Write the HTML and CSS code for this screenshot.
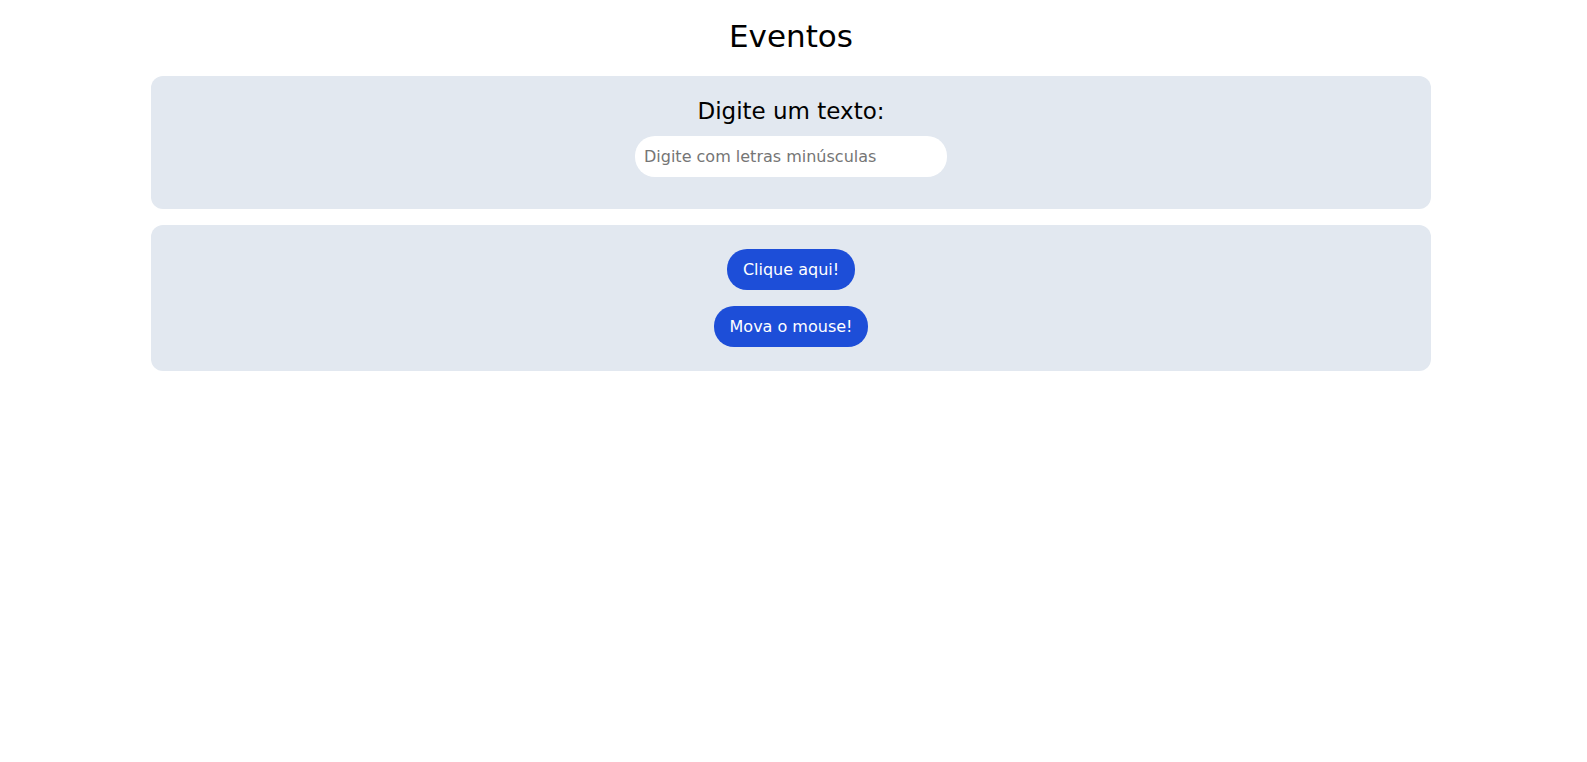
FILE: index.html
```html
<!DOCTYPE html>
<html lang="pt-BR">
<head>
    <meta charset="UTF-8">
    <meta name="viewport" content="width=device-width, initial-scale=1.0">
    <title>Eventos</title>
    <link rel="stylesheet" href="styles.css">
</head>
<body>
    <h1>Eventos</h1>

    <div class="container">
        <div class="card card-input">
            <h2>Digite um texto:</h2>
            <input type="text" id="texto" placeholder="Digite com letras minúsculas">
        </div>

        <div class="card card-buttons">
            <button id="clique">Clique aqui!</button>
            <button id="mouse">Mova o mouse!</button>
        </div>
    </div>
</body>
</html>
```

FILE: styles.css
```css
body {
    font-family: 'DejaVu Sans', sans-serif;
    margin: 0;
    padding: 0 5px 0 0;
    color: #000;
    background-color: #fff;
}
h1 {
    font-size: 31px;
    font-weight: normal;
    line-height: 40px;
    text-align: center;
    margin: 16px 0 20px;
}
.container {
    max-width: 1280px;
    margin: 0 auto;
    display: flex;
    flex-direction: column;
    gap: 16px;
}
.card {
    background-color: #e2e8f0;
    border-radius: 12px;
    display: flex;
    flex-direction: column;
    align-items: center;
}
.card-input {
    padding: 20px 0 32px;
}
.card-input h2 {
    font-size: 23px;
    font-weight: normal;
    line-height: 31px;
    margin: 0 0 9px;
}
input {
    width: 312px;
    height: 41px;
    box-sizing: border-box;
    padding: 0 9px;
    border: none;
    border-radius: 20px;
    background-color: #fff;
    font-family: inherit;
    font-size: 16px;
    outline: none;
}
input::placeholder {
    color: #757575;
}
.card-buttons {
    padding: 24px 0;
    gap: 16px;
}
button {
    height: 41px;
    padding: 0 16px;
    background-color: #1d4ed8;
    color: #fff;
    border: none;
    border-radius: 20px;
    font-family: inherit;
    font-size: 16px;
    cursor: pointer;
}
```
